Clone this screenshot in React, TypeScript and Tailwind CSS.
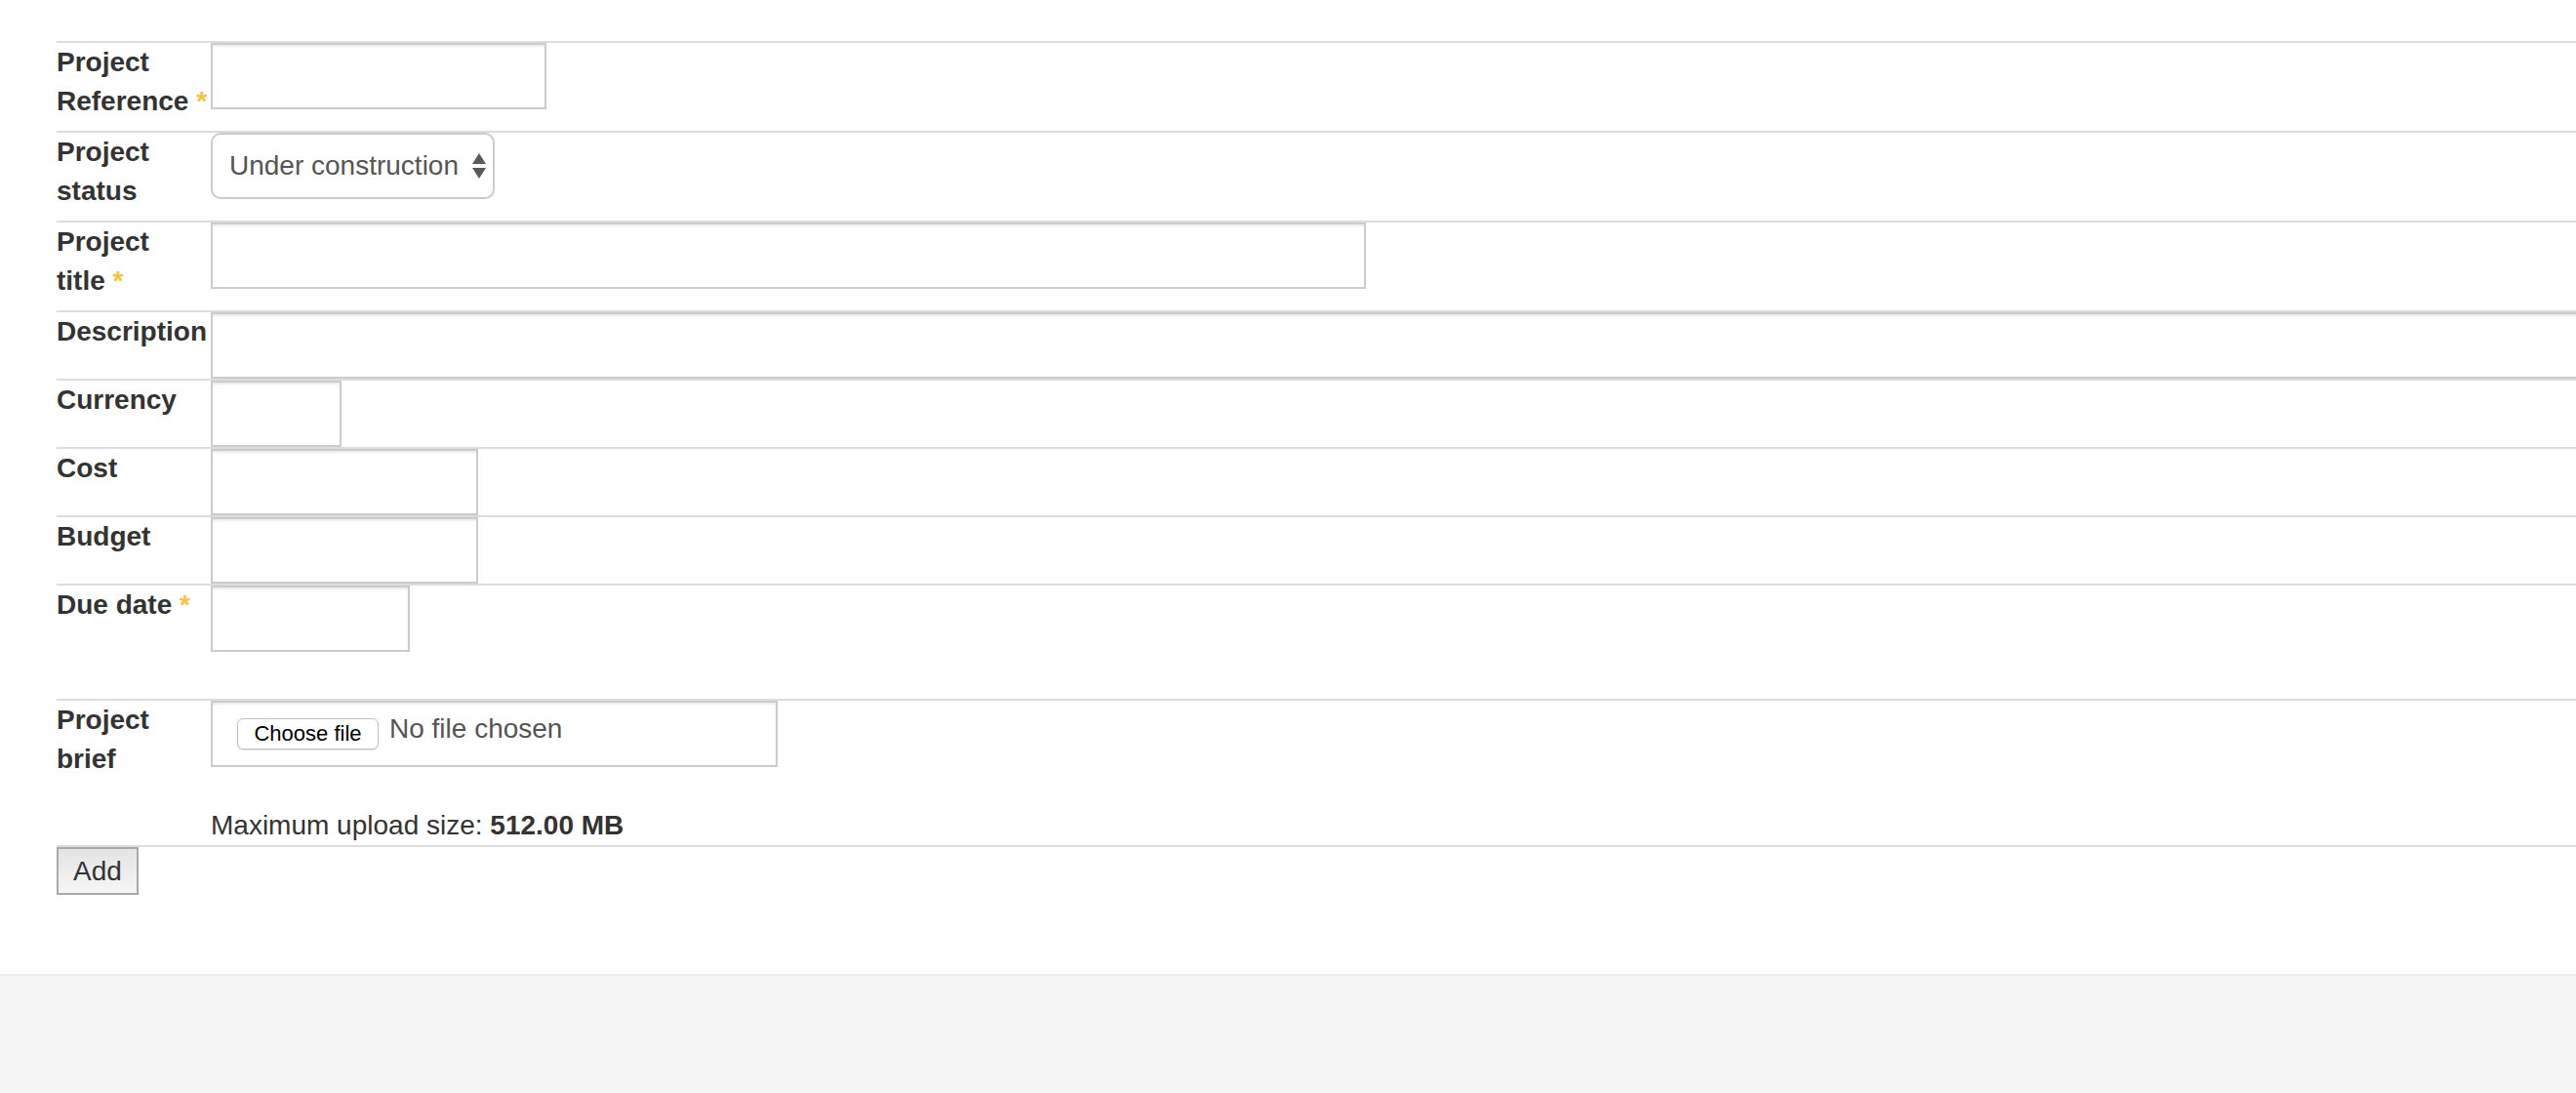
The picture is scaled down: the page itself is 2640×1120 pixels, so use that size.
import type { ReactNode } from 'react';

const field =
  'h-[68px] shrink-0 border-2 border-[#ccc] bg-white shadow-[inset_0_2px_2px_rgba(0,0,0,0.075)] outline-none';

function Required() {
  return <span className="text-[#f5c341]">{'\u00a0*'}</span>;
}

function Row({
  label,
  required,
  children,
}: {
  label: string;
  required?: boolean;
  children: ReactNode;
}) {
  return (
    <div className="flex items-start border-t-2 border-[#ddd]">
      <label className="w-[158px] shrink-0 pb-[10px] font-bold">
        {label}
        {required && <Required />}
      </label>
      <div className="flex flex-col items-start">{children}</div>
    </div>
  );
}

export default function App() {
  return (
    <div className="flex min-h-screen flex-col overflow-x-hidden bg-white font-['Liberation_Sans',Arial,sans-serif] text-[28px] leading-[40px] text-[#333]">
      <form className="pl-[58px] pt-[42px] pb-[81px]" onSubmit={(e) => e.preventDefault()}>
        <Row label="Project Reference" required>
          <input type="text" className={`${field} w-[344px]`} />
        </Row>

        <Row label="Project status">
          <div className="relative h-[68px] w-[291px]">
            <select
              defaultValue="construction"
              className="h-full w-full appearance-none rounded-[10px] border-2 border-[#ccc] bg-white pl-[17px] text-[28px] text-[#555] outline-none"
            >
              <option value="construction">Under construction</option>
              <option value="planned">Planned</option>
              <option value="done">Completed</option>
            </select>
            <svg
              className="pointer-events-none absolute right-[9px] top-1/2 -translate-y-1/2"
              width="14"
              height="26"
              viewBox="0 0 14 26"
            >
              <path d="M0 11 L7 0 L14 11 Z" fill="#5a5a5a" />
              <path d="M0 15 L14 15 L7 26 Z" fill="#5a5a5a" />
            </svg>
          </div>
        </Row>

        <Row label="Project title" required>
          <input type="text" className={`${field} w-[1184px]`} />
        </Row>

        <Row label="Description">
          <textarea className={`${field} w-[2500px] resize-none`} />
        </Row>

        <Row label="Currency">
          <input type="text" className={`${field} w-[134px]`} />
        </Row>

        <Row label="Cost">
          <input type="text" className={`${field} w-[274px]`} />
        </Row>

        <Row label="Budget">
          <input type="text" className={`${field} w-[274px]`} />
        </Row>

        <Row label="Due date" required>
          <input type="text" className={`${field} mb-[48px] w-[204px]`} />
        </Row>

        <Row label="Project brief">
          <div className={`${field} flex w-[581px] items-center pl-[25px]`}>
            <button
              type="button"
              className="h-[32px] w-[145px] rounded-[6px] border border-[#c2c2c2] bg-white text-[22px] leading-[30px] text-black shadow-[0_1px_1px_rgba(0,0,0,0.12)]"
            >
              Choose file
            </button>
            <span className="mb-[10px] ml-[11px] text-[#555]">No file chosen</span>
          </div>
          <p className="mt-[40px]">
            Maximum upload size: <strong className="font-bold">512.00 MB</strong>
          </p>
        </Row>

        <div className="border-t-2 border-[#ddd]">
          <button
            type="submit"
            className="flex h-[49px] w-[84px] items-center justify-center border-2 border-[#a9a9a9] bg-linear-to-b from-[#e4e4e4] to-[#f6f6f6] text-[28px] text-[#333]"
          >
            Add
          </button>
        </div>
      </form>

      <footer className="flex-1 border-t-2 border-[#ececec] bg-[#f5f5f5]" />
    </div>
  );
}
